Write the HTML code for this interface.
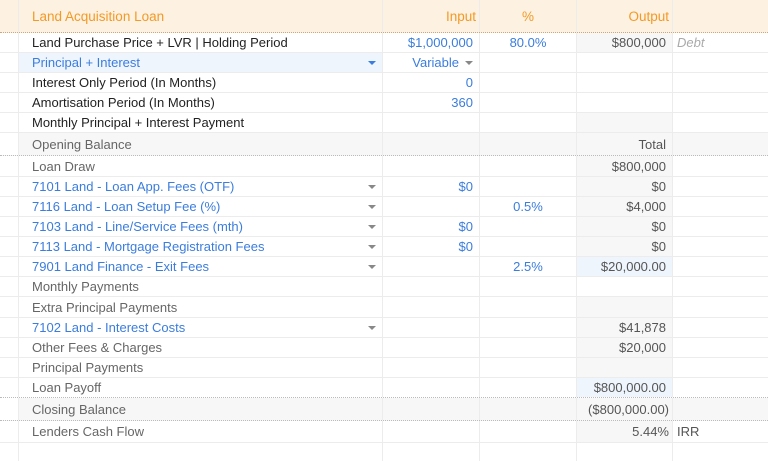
<!DOCTYPE html>
<html><head><style>
body{margin:0;width:768px;height:461px;overflow:hidden;background:#fff;font-family:"Liberation Sans",sans-serif;font-size:13px;color:#222;position:relative}
.r{position:absolute;left:0;width:768px;border-bottom:1px solid #ececec}
.c{position:absolute;top:0;height:100%;border-right:1px solid #ececec;box-sizing:border-box;white-space:nowrap;display:flex;align-items:center;padding:0 6px}
.c0{left:0;width:19px}.c1{left:19px;width:364px;padding-left:13px}.c2{left:383px;width:97px;justify-content:flex-end}.c3{left:480px;width:97px;justify-content:center}.c4{left:577px;width:96px;justify-content:flex-end;color:#555}.c5{left:673px;width:95px;border-right:none;padding-left:4px}
.b{color:#3b7ddd}.g{color:#666}.gr{background:#f7f7f7}.bl{background:#eef5fd}
.dd{position:absolute;right:6px;top:50%;margin-top:-2px;width:0;height:0;border-left:4px solid transparent;border-right:4px solid transparent;border-top:4px solid #888}
</style></head><body>
<div class="r" style="top:0;height:32px;background:#fdf1e2;border-bottom:1px dotted #c9a880;color:#f39a25;font-size:13.5px">
<div class="c c0"></div><div class="c c1" style="color:#f39a25">Land Acquisition Loan</div><div class="c c2" style="color:#f39a25;padding-right:3px">Input</div><div class="c c3" style="color:#f39a25">%</div><div class="c c4" style="color:#f39a25;padding-right:3px">Output</div><div class="c c5"></div></div>

<div class="r" style="top:33px;height:19px"><div class="c c0"></div><div class="c c1">Land Purchase Price + LVR | Holding Period</div><div class="c c2 b">$1,000,000</div><div class="c c3 b">80.0%</div><div class="c c4 gr">$800,000</div><div class="c c5" style="color:#aaa;font-style:italic">Debt</div></div>
<div class="r" style="top:53px;height:19px"><div class="c c0"></div><div class="c c1 b bl">Principal + Interest<span class="dd" style="border-top-color:#3b7ddd"></span></div><div class="c c2 b" style="padding-right:20px">Variable<span class="dd"></span></div><div class="c c3"></div><div class="c c4"></div><div class="c c5"></div></div>
<div class="r" style="top:73px;height:19px"><div class="c c0"></div><div class="c c1">Interest Only Period (In Months)</div><div class="c c2 b">0</div><div class="c c3"></div><div class="c c4"></div><div class="c c5"></div></div>
<div class="r" style="top:93px;height:19px"><div class="c c0"></div><div class="c c1">Amortisation Period (In Months)</div><div class="c c2 b">360</div><div class="c c3"></div><div class="c c4"></div><div class="c c5"></div></div>
<div class="r" style="top:113px;height:19px"><div class="c c0"></div><div class="c c1">Monthly Principal + Interest Payment</div><div class="c c2"></div><div class="c c3"></div><div class="c c4 gr"></div><div class="c c5"></div></div>
<div class="r" style="top:133px;height:22px;background:#f7f7f7;border-bottom:1px dotted #bbb"><div class="c c0" style="background:#fff"></div><div class="c c1 g">Opening Balance</div><div class="c c2"></div><div class="c c3"></div><div class="c c4">Total</div><div class="c c5"></div></div>

<div class="r" style="top:156px;height:20px"><div class="c c0"></div><div class="c c1 g">Loan Draw</div><div class="c c2"></div><div class="c c3"></div><div class="c c4 gr">$800,000</div><div class="c c5"></div></div>
<div class="r" style="top:177px;height:19px"><div class="c c0"></div><div class="c c1 b">7101 Land - Loan App. Fees (OTF)<span class="dd"></span></div><div class="c c2 b">$0</div><div class="c c3"></div><div class="c c4 gr">$0</div><div class="c c5"></div></div>
<div class="r" style="top:197px;height:19px"><div class="c c0"></div><div class="c c1 b">7116 Land - Loan Setup Fee (%)<span class="dd"></span></div><div class="c c2"></div><div class="c c3 b">0.5%</div><div class="c c4 gr">$4,000</div><div class="c c5"></div></div>
<div class="r" style="top:217px;height:19px"><div class="c c0"></div><div class="c c1 b">7103 Land - Line/Service Fees (mth)<span class="dd"></span></div><div class="c c2 b">$0</div><div class="c c3"></div><div class="c c4 gr">$0</div><div class="c c5"></div></div>
<div class="r" style="top:237px;height:19px"><div class="c c0"></div><div class="c c1 b">7113 Land - Mortgage Registration Fees<span class="dd"></span></div><div class="c c2 b">$0</div><div class="c c3"></div><div class="c c4 gr">$0</div><div class="c c5"></div></div>
<div class="r" style="top:257px;height:19px"><div class="c c0"></div><div class="c c1 b">7901 Land Finance - Exit Fees<span class="dd"></span></div><div class="c c2"></div><div class="c c3 b">2.5%</div><div class="c c4 bl">$20,000.00</div><div class="c c5"></div></div>
<div class="r" style="top:277px;height:19px"><div class="c c0"></div><div class="c c1 g">Monthly Payments</div><div class="c c2"></div><div class="c c3"></div><div class="c c4"></div><div class="c c5"></div></div>
<div class="r" style="top:297px;height:20px"><div class="c c0"></div><div class="c c1 g">Extra Principal Payments</div><div class="c c2"></div><div class="c c3"></div><div class="c c4 gr"></div><div class="c c5"></div></div>
<div class="r" style="top:318px;height:19px"><div class="c c0"></div><div class="c c1 b">7102 Land - Interest Costs<span class="dd"></span></div><div class="c c2"></div><div class="c c3"></div><div class="c c4 gr">$41,878</div><div class="c c5"></div></div>
<div class="r" style="top:338px;height:19px"><div class="c c0"></div><div class="c c1 g">Other Fees &amp; Charges</div><div class="c c2"></div><div class="c c3"></div><div class="c c4 gr">$20,000</div><div class="c c5"></div></div>
<div class="r" style="top:358px;height:19px"><div class="c c0"></div><div class="c c1 g">Principal Payments</div><div class="c c2"></div><div class="c c3"></div><div class="c c4 gr"></div><div class="c c5"></div></div>
<div class="r" style="top:378px;height:19px;border-bottom:1px dotted #bbb"><div class="c c0"></div><div class="c c1 g">Loan Payoff</div><div class="c c2"></div><div class="c c3"></div><div class="c c4 bl">$800,000.00</div><div class="c c5"></div></div>
<div class="r" style="top:398px;height:22px;background:#f7f7f7;border-bottom:1px dotted #bbb"><div class="c c0" style="background:#fff"></div><div class="c c1 g">Closing Balance</div><div class="c c2"></div><div class="c c3"></div><div class="c c4" style="padding-right:3px">($800,000.00)</div><div class="c c5"></div></div>
<div class="r" style="top:421px;height:21px"><div class="c c0"></div><div class="c c1 g">Lenders Cash Flow</div><div class="c c2"></div><div class="c c3"></div><div class="c c4 gr" style="padding-right:3px">5.44%</div><div class="c c5" style="color:#555">IRR</div></div>
<div class="r" style="top:443px;height:18px;border-bottom:none"><div class="c c0"></div><div class="c c1"></div><div class="c c2"></div><div class="c c3"></div><div class="c c4"></div><div class="c c5"></div></div>
</body></html>
